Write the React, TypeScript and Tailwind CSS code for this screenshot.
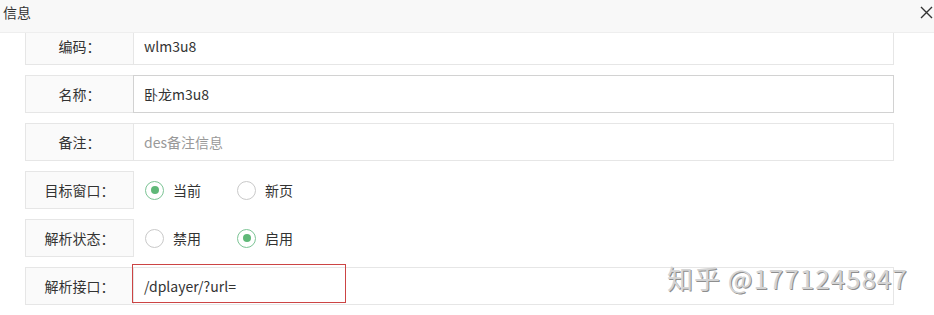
import React from 'react';

const font = { fontFamily: '"Microsoft YaHei", "Noto Sans CJK SC", "Noto Sans", sans-serif' };

function Label({ children }: { children: React.ReactNode }) {
  return (
    <div className="w-[109px] h-[38px] shrink-0 flex items-center justify-center border border-[#e6e6e6] bg-[#fafafa] text-[14px] text-[#333]">
      {children}
    </div>
  );
}

function TextRow({ label, value, placeholder, dark }: { label: string; value?: string; placeholder?: string; dark?: boolean }) {
  return (
    <div className="flex">
      <Label>{label}</Label>
      <div
        className={`ml-[-1px] w-[761px] h-[38px] flex items-center pl-[10px] border bg-white text-[14px] ${
          dark ? 'border-[#d2d2d2]' : 'border-[#e6e6e6]'
        } ${value ? 'text-[#333]' : 'text-[#999]'}`}
      >
        {value || placeholder}
      </div>
    </div>
  );
}

function Radio({ checked, text }: { checked?: boolean; text: string }) {
  return (
    <div className="flex items-center w-[92px]">
      <span
        className={`w-[19px] h-[19px] rounded-full border-[1.5px] flex items-center justify-center ${
          checked ? 'border-[#7cc495]' : 'border-[#c9c9c9]'
        }`}
      >
        {checked && <span className="w-[8px] h-[8px] rounded-full bg-[#5fb878]" />}
      </span>
      <span className="ml-[9px] text-[14px] text-[#333]">{text}</span>
    </div>
  );
}

function RadioRow({ label, options }: { label: string; options: { text: string; checked?: boolean }[] }) {
  return (
    <div className="flex">
      <Label>{label}</Label>
      <div className="flex items-center pl-[11px]">
        {options.map((o) => (
          <Radio key={o.text} text={o.text} checked={o.checked} />
        ))}
      </div>
    </div>
  );
}

export default function App() {
  return (
    <div className="relative w-[934px] h-[315px] bg-white overflow-hidden" style={font}>
      <div className="h-[33px] flex items-center justify-between bg-[#f8f8f8] border-b border-[#eeeeee] pl-[3px] pr-[1px]">
        <span className="text-[14px] text-[#333] -mt-[8px]">信息</span>
        <svg width="13" height="13" viewBox="0 0 13 13" className="-mt-[8px]">
          <path d="M1 1L12 12M12 1L1 12" stroke="#333" strokeWidth="1.4" />
        </svg>
      </div>

      <div className="h-[282px] overflow-hidden">
        <div className="flex flex-col gap-[10px] pl-[25px] -mt-[6px]">
          <TextRow label="编码：" value="wlm3u8" />
          <TextRow label="名称：" value="卧龙m3u8" dark />
          <TextRow label="备注：" placeholder="des备注信息" />
          <RadioRow label="目标窗口：" options={[{ text: '当前', checked: true }, { text: '新页' }]} />
          <RadioRow label="解析状态：" options={[{ text: '禁用' }, { text: '启用', checked: true }]} />
          <TextRow label="解析接口：" value="/dplayer/?url=" />
        </div>
      </div>

      {/* annotation box */}
      <div className="absolute left-[132px] top-[264px] w-[214px] h-[39px] border-[1.5px] border-[#cc4444]" />

      {/* watermark */}
      <div
        className="absolute left-[667px] top-[258px] text-[26px] text-[#d4d4d4] tracking-[1px] [text-shadow:1px_1px_0_#8e8e8e]"
        style={{ fontFamily: '"Noto Sans CJK SC", "Liberation Sans", sans-serif' }}
      >
        知乎 @1771245847
      </div>
    </div>
  );
}
